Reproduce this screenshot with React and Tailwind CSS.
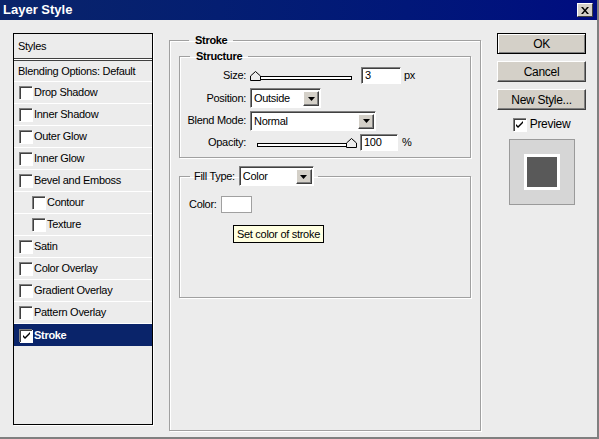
const font = { fontFamily: '"Liberation Sans", Arial, sans-serif', letterSpacing: '-0.3px' }

const Check = ({ checked, className = '' }) => (
  <span
    className={`flex h-[13px] w-[13px] shrink-0 items-center justify-center border-t border-l border-[#808080] bg-white shadow-[inset_1px_1px_0_#404040,1px_1px_0_#ffffff] ${className}`}
  >
    {checked && (
      <svg width="9" height="9" viewBox="0 0 9 9">
        <path d="M1 4 L3 6 L8 1 L8 3 L3 8 L1 6 Z" fill="#000" />
      </svg>
    )}
  </span>
)

const Arrow = () => (
  <span className="flex h-full w-[16px] items-center justify-center border border-t-white border-l-white border-r-[#404040] border-b-[#404040] bg-[#d4d0c8] shadow-[inset_-1px_-1px_0_#808080]">
    <svg width="7" height="4" viewBox="0 0 7 4">
      <path d="M0 0 H7 L3.5 4 Z" fill="#000" />
    </svg>
  </span>
)

const Select = ({ value, width }) => (
  <div
    className="flex h-[20px] items-stretch border border-t-[#808080] border-l-[#808080] border-r-white border-b-white bg-white"
    style={{ width }}
  >
    <div className="flex flex-1 items-center border-t border-l border-[#404040] pl-[2px] text-[11px]">{value}</div>
    <div className="border-t border-[#404040] p-[1px] pl-0">
      <Arrow />
    </div>
  </div>
)

const Field = ({ value, width }) => (
  <div
    className="flex h-[17px] items-center border border-t-[#808080] border-l-[#808080] border-r-white border-b-white bg-white pl-[3px] text-[11px] shadow-[inset_1px_1px_0_#404040]"
    style={{ width }}
  >
    {value}
  </div>
)

const Thumb = () => (
  <svg width="11" height="10" viewBox="0 0 11 10" className="shrink-0">
    <path d="M0.5 9.5 V5 L5.5 0.5 L10.5 5 V9.5 Z" fill="#ececec" stroke="#000" />
  </svg>
)

const Slider = ({ at, width }) => (
  <div className="relative h-[10px]" style={{ width }}>
    <div className="absolute left-[4px] right-0 top-[5px] h-[4px] border border-black bg-white" />
    <div className="absolute top-0" style={{ left: at }}>
      <Thumb />
    </div>
  </div>
)

const Row = ({ label, children, className = '' }) => (
  <div className={`flex items-center ${className}`}>
    <span className="w-[70px] pr-[4px] text-right text-[11px]">{label}</span>
    {children}
  </div>
)

const styles = [
  ['Drop Shadow'],
  ['Inner Shadow'],
  ['Outer Glow'],
  ['Inner Glow'],
  ['Bevel and Emboss'],
  ['Contour', true],
  ['Texture', true],
  ['Satin'],
  ['Color Overlay'],
  ['Gradient Overlay'],
  ['Pattern Overlay'],
]

const Button = ({ children, primary }) => (
  <button
    className={`flex h-[21px] w-[89px] items-center justify-center bg-[#d4d0c8] text-[12px] ${
      primary
        ? 'border border-black shadow-[inset_1px_1px_0_#fff,inset_-1px_-1px_0_#808080]'
        : 'border border-t-white border-l-white border-r-[#404040] border-b-[#404040] shadow-[inset_-1px_-1px_0_#808080]'
    }`}
  >
    {children}
  </button>
)

export default function App() {
  return (
    <div className="flex h-[439px] w-[599px] flex-col border-r-2 border-b-2 border-[#808080] bg-[#ececec] text-black" style={font}>
      <div className="flex h-[20px] items-center justify-between bg-gradient-to-r from-[#0a246a] to-[#000c80] pl-[3px] pr-[4px]">
        <span className="text-[13px] font-bold tracking-[0] text-white">Layer Style</span>
        <span className="flex h-[14px] w-[16px] items-center justify-center border border-t-white border-l-white border-r-[#404040] border-b-[#404040] bg-[#d4d0c8]">
          <svg width="8" height="7" viewBox="0 0 8 7">
            <path d="M0 0 H2 L4 2.5 L6 0 H8 L5 3.5 L8 7 H6 L4 4.5 L2 7 H0 L3 3.5 Z" fill="#000" />
          </svg>
        </span>
      </div>

      <div className="flex flex-1 pl-[13px] pt-[13px]">
        {/* style list */}
        <div className="flex h-[392px] w-[140px] flex-col border border-black bg-[#ececec] shadow-[1px_1px_0_#fff]">
          <div className="flex h-[24px] items-center pl-[4px] text-[11px]">Styles</div>
          <div className="h-[3px] border-y border-[#404040] bg-white" />
          <div className="flex h-[21px] items-center border-b border-white pl-[4px] text-[11px]">Blending Options: Default</div>
          {styles.map(([name, sub]) => (
            <div
              key={name}
              className={`flex h-[22px] items-center gap-[2px] border-b border-white text-[11px] ${sub ? 'pl-[18px]' : 'pl-[5px]'}`}
            >
              <Check />
              {name}
            </div>
          ))}
          <div className="flex h-[22px] items-center gap-[2px] bg-[#0a246a] pl-[5px] text-[11px] font-bold text-white">
            <Check checked />
            Stroke
          </div>
        </div>

        {/* stroke settings */}
        <fieldset className="ml-[16px] h-[398px] w-[312px] border border-[#a0a0a0] px-[9px] shadow-[inset_1px_1px_0_#fff,1px_1px_0_#fff]">
          <legend className="ml-[10px] px-[6px] text-[11px] font-bold leading-[14px]">Stroke</legend>

          <fieldset className="mt-[2px] h-[109px] border border-[#a0a0a0] pl-0 shadow-[inset_1px_1px_0_#fff,1px_1px_0_#fff]">
            <legend className="ml-[10px] px-[6px] text-[11px] font-bold leading-[14px]">Structure</legend>
            <Row label="Size:" className="mt-[3px] h-[19px]">
              <Slider at={0} width={102} />
              <div className="ml-[9px]">
                <Field value="3" width={40} />
              </div>
              <span className="ml-[3px] text-[11px]">px</span>
            </Row>
            <Row label="Position:" className="mt-[3px] h-[20px]">
              <Select value="Outside" width={71} />
            </Row>
            <Row label="Blend Mode:" className="mt-[2px] h-[21px]">
              <Select value="Normal" width={126} />
            </Row>
            <Row label="Opacity:" className="mt-[1px] h-[21px]">
              <div className="ml-[3px]">
                <Slider at={93} width={104} />
              </div>
              <div className="ml-[3px]">
                <Field value="100" width={38} />
              </div>
              <span className="ml-[4px] text-[11px]">%</span>
            </Row>
          </fieldset>

          <fieldset className="mt-[8px] h-[132px] border border-[#a0a0a0] px-[9px] shadow-[inset_1px_1px_0_#fff,1px_1px_0_#fff]">
            <legend className="ml-[1px] flex items-center gap-[4px] px-[4px] text-[11px]">
              Fill Type:
              <Select value="Color" width={75} />
            </legend>
            <div className="mt-[10px] flex items-center gap-[4px] text-[11px]">
              Color:
              <span className="h-[17px] w-[31px] border border-[#a0a0a0] bg-white" />
            </div>
            <div className="relative h-[30px]">
              <div className="absolute left-[44px] top-[12px] border border-black bg-[#ffffe1] px-[3px] py-[1px] text-[11px] leading-[14px]">
                Set color of stroke
              </div>
            </div>
          </fieldset>
        </fieldset>

        {/* buttons */}
        <div className="ml-[16px] flex w-[89px] flex-col items-center">
          <Button primary>OK</Button>
          <div className="mt-[7px]">
            <Button>Cancel</Button>
          </div>
          <div className="mt-[7px]">
            <Button>New Style...</Button>
          </div>
          <div className="mt-[5px] flex items-center gap-[4px] text-[12px]">
            <Check checked />
            Preview
          </div>
          <div className="mt-[6px] flex h-[66px] w-[66px] items-center justify-center border border-[#9a9a9a] bg-[#d6d6d6]">
            <span className="h-[36px] w-[36px] border-[3px] border-white bg-[#595959]" />
          </div>
        </div>
      </div>
    </div>
  )
}
